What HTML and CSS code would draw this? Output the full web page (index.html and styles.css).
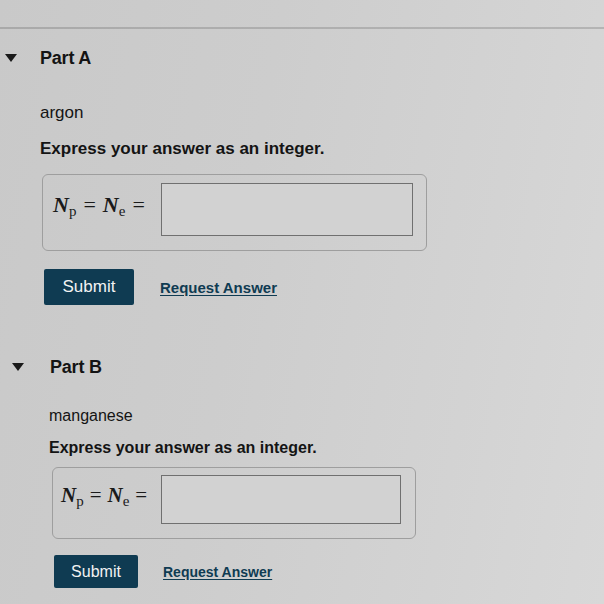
FILE: index.html
```html
<!DOCTYPE html>
<html>
<head>
<meta charset="utf-8">
<link rel="stylesheet" href="styles.css">
</head>
<body>
<div class="page">
  <div class="topline"></div>

  <section class="part part-a">
    <div class="part-head">
      <span class="caret"></span>
      <h2 class="part-title">Part A</h2>
    </div>
    <div class="part-body">
      <p class="element">argon</p>
      <p class="instr">Express your answer as an integer.</p>
      <div class="answer-box">
        <span class="math"><i>N</i><sub>p</sub><span class="op">=</span><i>N</i><sub>e</sub><span class="op">=</span></span>
        <div class="input"></div>
      </div>
      <div class="actions">
        <button class="submit">Submit</button>
        <a class="request">Request Answer</a>
      </div>
    </div>
  </section>

  <section class="part part-b">
    <div class="part-head">
      <span class="caret"></span>
      <h2 class="part-title">Part B</h2>
    </div>
    <div class="part-body">
      <p class="element">manganese</p>
      <p class="instr">Express your answer as an integer.</p>
      <div class="answer-box">
        <span class="math"><i>N</i><sub>p</sub><span class="op">=</span><i>N</i><sub>e</sub><span class="op">=</span></span>
        <div class="input"></div>
      </div>
      <div class="actions">
        <button class="submit">Submit</button>
        <a class="request">Request Answer</a>
      </div>
    </div>
  </section>
</div>
</body>
</html>
```

FILE: styles.css
```css
html, body {
  margin: 0;
  padding: 0;
}
body {
  width: 604px;
  height: 604px;
  overflow: hidden;
  background: linear-gradient(100deg, #c9c9c9 0%, #cdcdcd 40%, #d3d3d3 75%, #d8d8d8 100%);
  font-family: "Liberation Sans", Arial, Helvetica, sans-serif;
  color: #141414;
}
.page {
  padding-top: 27px;
}
.topline {
  height: 2px;
  background: linear-gradient(90deg, #a9a9a9, #b4b4b4);
  margin-bottom: 15px;
}
.part-head {
  display: flex;
  align-items: center;
  height: 28px;
}
.caret {
  width: 0;
  height: 0;
  border-left: 6px solid transparent;
  border-right: 6px solid transparent;
  border-top: 8px solid #1a1a1a;
}
.part-title {
  margin: 0;
  font-size: 18px;
  font-weight: bold;
  letter-spacing: -0.2px;
}
.element {
  margin: 0;
  font-size: 17px;
}
.instr {
  margin: 0;
  font-size: 17px;
  font-weight: bold;
}
.answer-box {
  display: flex;
  align-items: center;
  border: 1.5px solid #9e9e9e;
  border-radius: 6px;
  box-sizing: border-box;
}
.math {
  font-family: "Liberation Serif", "Times New Roman", serif;
  font-size: 22px;
  white-space: nowrap;
  color: #1a1a1a;
}
.math i {
  font-weight: bold;
  font-style: italic;
}
.math sub {
  font-size: 15px;
  vertical-align: -4px;
}
.math .op {
  margin: 0 7px;
}
.input {
  border: 1.5px solid #707070;
  background: #d2d2d2;
  box-sizing: border-box;
}
.actions {
  display: flex;
  align-items: center;
}
.submit {
  background: #0f3b52;
  color: #f2f2f2;
  border: none;
  border-radius: 2px;
  font-family: "Liberation Sans", Arial, sans-serif;
  font-size: 17px;
  padding: 0;
}
.request {
  color: #0f3b52;
  font-weight: bold;
  font-size: 15px;
  text-decoration: underline;
  text-underline-offset: 2px;
}

/* Part A geometry */
.part-a .part-head { padding-left: 5px; }
.part-a .caret { margin-right: 23px; }
.part-a .part-body { padding-left: 40px; padding-top: 31px; }
.part-a .element { margin-bottom: 16px; }
.part-a .instr { margin-bottom: 15px; }
.part-a .answer-box {
  margin-left: 2px;
  width: 385px;
  height: 77px;
  padding: 8px 13px 14px 10px;
  align-items: flex-start;
}
.part-a .math { margin-top: 9px; margin-right: 9px; }
.part-a .input { width: 252px; height: 53px; }
.part-a .actions { margin-top: 18px; margin-left: 4px; }
.part-a .submit { width: 90px; height: 36px; }
.part-a .request { margin-left: 26px; }

/* Part B geometry */
.part-b { margin-top: 48px; }
.part-b .part-head { padding-left: 12px; }
.part-b .caret { margin-right: 26px; }
.part-b .part-body { padding-left: 49px; padding-top: 26px; }
.part-b .element { font-size: 16px; margin-bottom: 14px; }
.part-b .instr { font-size: 16px; margin-bottom: 10px; }
.part-b .answer-box {
  margin-left: 3px;
  width: 364px;
  height: 72px;
  padding: 7px 12px 13px 8px;
  align-items: flex-start;
}
.part-b .math { font-size: 21px; margin-top: 8px; margin-right: 8px; }
.part-b .math .op { margin: 0 6px; }
.part-b .input { width: 240px; height: 49px; }
.part-b .actions { margin-top: 16px; margin-left: 5px; }
.part-b .submit { width: 84px; height: 33px; font-size: 16px; }
.part-b .request { margin-left: 25px; font-size: 14px; }
```
